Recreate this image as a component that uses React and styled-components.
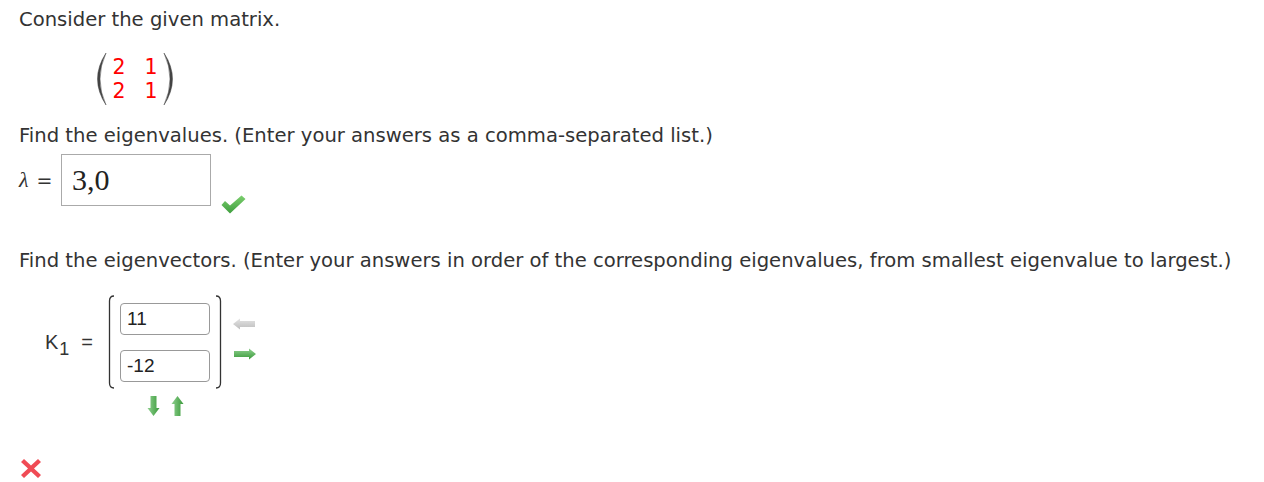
import React from 'react'
import styled, { createGlobalStyle } from 'styled-components';

const GlobalStyle = createGlobalStyle`
    body {
        margin: 0;
        background: #fff;
        font-family: "DejaVu Sans", Verdana, sans-serif;
        color: #333;
    }
`

const Page = styled.div`
    padding: 9px 0 0 19px;
    display: flex;
    flex-direction: column;
`

const Text = styled.div`
    font-size: 19.6px;
    line-height: 22px;
    color: #333;
    white-space: nowrap;
    margin-top: ${p => p.$top || 0}px;
`

const MatrixWrap = styled.div`
    display: flex;
    align-items: center;
    margin: 21px 0 0 78px;
    height: 54px;
`

const Paren = styled.svg`
    width: 10px;
    height: 54px;
    display: block;
`

const MatrixGrid = styled.div`
    display: grid;
    grid-template-columns: 24px 24px;
    column-gap: 8px;
    row-gap: 1px;
    font-size: 20.5px;
    line-height: 23px;
    color: #f00;
    text-align: center;
`

const AnswerRow = styled.div`
    display: flex;
    align-items: flex-end;
    margin-top: 7px;
    height: 52px;
`

const Label = styled.div`
    display: flex;
    align-items: center;
    align-self: center;
    gap: 8px;
    width: 42px;
    font-size: 19px;
    color: #333;
`

const Lambda = styled.span`
    font-family: "Liberation Serif", "DejaVu Serif", serif;
    font-style: italic;
    font-size: 22px;
`

const BigBox = styled.div`
    box-sizing: border-box;
    width: 150px;
    height: 52px;
    border: 1px solid #aaa;
    padding-left: 10px;
    display: flex;
    align-items: center;
    font-family: "Liberation Serif", serif;
    font-size: 30px;
    color: #222;
`

const Mark = styled.svg`
    display: block;
    margin: 0 0 -8px 10px;
`

const VectorRow = styled.div`
    display: flex;
    align-items: center;
    margin-top: 22px;
    height: 96px;
`

const KLabel = styled.div`
    margin-left: 26px;
    width: 63px;
    font-family: "Liberation Sans", Arial, sans-serif;
    font-size: 20px;
    line-height: 24px;
    color: #333;
    white-space: nowrap;
`

const Sub = styled.span`
    display: inline-block;
    font-size: 18px;
    transform: translateY(6px);
    margin-left: 1px;
`

const Eq = styled.span`
    margin-left: 12px;
`

const Bracket = styled.svg`
    width: 8px;
    height: 94px;
    display: block;
`

const Cells = styled.div`
    display: flex;
    flex-direction: column;
    gap: 15px;
    padding: 0 4px;
`

const Cell = styled.input`
    box-sizing: border-box;
    width: 90px;
    height: 32px;
    border: 1px solid #999;
    border-radius: 4px;
    padding: 0 6px;
    font-family: "Liberation Sans", Arial, sans-serif;
    font-size: 19px;
    color: #222;
    background: #fff;
    outline: none;
`

const SideArrows = styled.div`
    display: flex;
    flex-direction: column;
    gap: 18px;
    margin-left: 10px;
    margin-top: -7px;
`

const BottomArrows = styled.div`
    display: flex;
    gap: 11px;
    margin: 5px 0 0 128px;
`

const Cross = styled.svg`
    display: block;
    margin: 41px 0 0 1px;
`

const HArrow = ({ color1, color2, dir }) => (
    <svg width="25" height="12" viewBox="0 0 25 12">
        <defs>
            <linearGradient id={`h${dir}`} x1="0" y1="0" x2="0" y2="1">
                <stop offset="0" stopColor={color1} />
                <stop offset="1" stopColor={color2} />
            </linearGradient>
        </defs>
        <path
            d={dir === 'left'
                ? 'M1 6 L8 0.5 L8 3 L23 3 L23 9 L8 9 L8 11.5 Z'
                : 'M24 6 L17 0.5 L17 3 L2 3 L2 9 L17 9 L17 11.5 Z'}
            fill={`url(#h${dir})`}
        />
    </svg>
)

const VArrow = ({ dir }) => (
    <svg width="13" height="22" viewBox="0 0 13 22">
        <defs>
            <linearGradient id={`v${dir}`} x1="0" y1="0" x2="1" y2="0">
                <stop offset="0" stopColor="#8fd08f" />
                <stop offset="1" stopColor="#3a9a3a" />
            </linearGradient>
        </defs>
        <path
            d={dir === 'down'
                ? 'M6.5 21 L12.5 13 L9.5 13 L9.5 1 L3.5 1 L3.5 13 L0.5 13 Z'
                : 'M6.5 1 L12.5 9 L9.5 9 L9.5 21 L3.5 21 L3.5 9 L0.5 9 Z'}
            fill={`url(#v${dir})`}
        />
    </svg>
)

const App = () => {
    return (
        <Page>
            <GlobalStyle />
            <Text>Consider the given matrix.</Text>
            <MatrixWrap>
                <Paren viewBox="0 0 10 54">
                    <path d="M9 1 Q0.5 14 0.5 27 Q0.5 40 9 53 Q3 40 3 27 Q3 14 9 1 Z" fill="#444" stroke="#444" strokeWidth="0.5" />
                </Paren>
                <MatrixGrid>
                    <span>2</span><span>1</span>
                    <span>2</span><span>1</span>
                </MatrixGrid>
                <Paren viewBox="0 0 10 54">
                    <path d="M1 1 Q9.5 14 9.5 27 Q9.5 40 1 53 Q7 40 7 27 Q7 14 1 1 Z" fill="#444" stroke="#444" strokeWidth="0.5" />
                </Paren>
            </MatrixWrap>
            <Text $top={19}>Find the eigenvalues. (Enter your answers as a comma-separated list.)</Text>
            <AnswerRow>
                <Label><Lambda>λ</Lambda><span>=</span></Label>
                <BigBox>3,0</BigBox>
                <Mark width="25" height="19" viewBox="0 0 25 19">
                    <defs>
                        <linearGradient id="chk" x1="0" y1="0" x2="0" y2="1">
                            <stop offset="0" stopColor="#7ccf6e" />
                            <stop offset="1" stopColor="#3f9e3f" />
                        </linearGradient>
                    </defs>
                    <path d="M0.5 10 L4 6 L9 10.5 L20.5 0.5 L24.5 4 L9 18.5 Z" fill="url(#chk)" />
                </Mark>
            </AnswerRow>
            <Text $top={44}>Find the eigenvectors. (Enter your answers in order of the corresponding eigenvalues, from smallest eigenvalue to largest.)</Text>
            <VectorRow>
                <KLabel>K<Sub>1</Sub><Eq>=</Eq></KLabel>
                <Bracket viewBox="0 0 8 94">
                    <path d="M6 1 Q1.5 1 1.5 6 L1.5 88 Q1.5 93 6 93" fill="none" stroke="#333" strokeWidth="1.3" />
                </Bracket>
                <Cells>
                    <Cell readOnly defaultValue="11" />
                    <Cell readOnly defaultValue="-12" />
                </Cells>
                <Bracket viewBox="0 0 8 94">
                    <path d="M2 1 Q6.5 1 6.5 6 L6.5 88 Q6.5 93 2 93" fill="none" stroke="#333" strokeWidth="1.3" />
                </Bracket>
                <SideArrows>
                    <HArrow dir="left" color1="#e4e4e4" color2="#bdbdbd" />
                    <HArrow dir="right" color1="#8fd08f" color2="#3a9a3a" />
                </SideArrows>
            </VectorRow>
            <BottomArrows>
                <VArrow dir="down" />
                <VArrow dir="up" />
            </BottomArrows>
            <Cross width="22" height="21" viewBox="0 0 22 21">
                <path d="M4 1 L11 7.5 L18 1 L21 4 L14 10.5 L21 17 L18 20 L11 13.5 L4 20 L1 17 L8 10.5 L1 4 Z" fill="#f04b55" />
            </Cross>
        </Page>
    );
}

export default App;
